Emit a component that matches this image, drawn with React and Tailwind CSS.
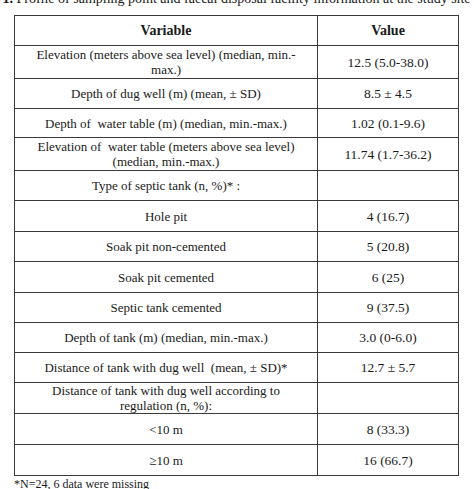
const ROWS = [
    { v: ['Elevation (meters above sea level) (median, min.-', 'max.)'], val: '12.5 (5.0-38.0)', h: 'h-[33px]' },
    { v: ['Depth of dug well (m) (mean, ± SD)'], val: '8.5 ± 4.5', h: 'h-[30px]' },
    { v: ['Depth of  water table (m) (median, min.-max.)'], val: '1.02 (0.1-9.6)', h: 'h-[29px]' },
    { v: ['Elevation of  water table (meters above sea level)', '(median, min.-max.)'], val: '11.74 (1.7-36.2)', h: 'h-[33px]' },
    { v: ['Type of septic tank (n, %)* :'], val: '', h: 'h-[30px]' },
    { v: ['Hole pit'], val: '4 (16.7)', h: 'h-[31px]' },
    { v: ['Soak pit non-cemented'], val: '5 (20.8)', h: 'h-[30px]' },
    { v: ['Soak pit cemented'], val: '6 (25)', h: 'h-[31px]' },
    { v: ['Septic tank cemented'], val: '9 (37.5)', h: 'h-[30px]' },
    { v: ['Depth of tank (m) (median, min.-max.)'], val: '3.0 (0-6.0)', h: 'h-[30px]' },
    { v: ['Distance of tank with dug well  (mean, ± SD)*'], val: '12.7 ± 5.7', h: 'h-[30px]' },
    { v: ['Distance of tank with dug well according to', 'regulation (n, %):'], val: '', h: 'h-[31px]' },
    { v: ['<10 m'], val: '8 (33.3)', h: 'h-[31px]' },
    { v: ['≥10 m'], val: '16 (66.7)', h: 'h-[31px]' },
]

const serif = "font-['Liberation_Serif','Times_New_Roman',serif]"

export default function App() {
    return (
        <div className={`w-[474px] h-[489px] overflow-hidden bg-white text-[#1a1a1a] ${serif}`}>
            {/* Caption, clipped at the top of the crop */}
            <p className="whitespace-nowrap text-[14px] leading-[15px] -mt-[9px] -ml-[34px]">
                <span className="font-bold">Table 1.</span> Profile of sampling point and faecal disposal facility information at the study site (N=30)
            </p>

            <table className={`ml-[14px] mt-[9px] w-[445px] table-fixed border-collapse border-[1.5px] border-[#3a3a3a] leading-[15px] ${serif}`}>
                <thead>
                    <tr className="h-[30px]">
                        <th className={`w-[303px] border border-[#3a3a3a] font-bold text-center text-[14px] ${serif}`}>Variable</th>
                        <th className={`border border-[#3a3a3a] font-bold text-center text-[14px] ${serif}`}>Value</th>
                    </tr>
                </thead>
                <tbody>
                    {ROWS.map((r, i) => (
                        <tr key={i} className={r.h}>
                            <td className={`border border-[#3a3a3a] text-center text-[13px] whitespace-pre ${serif}`}>
                                {r.v.map((line, j) => (
                                    <div key={j}>{line}</div>
                                ))}
                            </td>
                            <td className={`border border-[#3a3a3a] text-center text-[13.5px] whitespace-pre ${serif}`}>{r.val}</td>
                        </tr>
                    ))}
                </tbody>
            </table>

            <p className="ml-[14px] text-[12px] leading-[14px] mt-[1px]">*N=24, 6 data were missing</p>
        </div>
    )
}
